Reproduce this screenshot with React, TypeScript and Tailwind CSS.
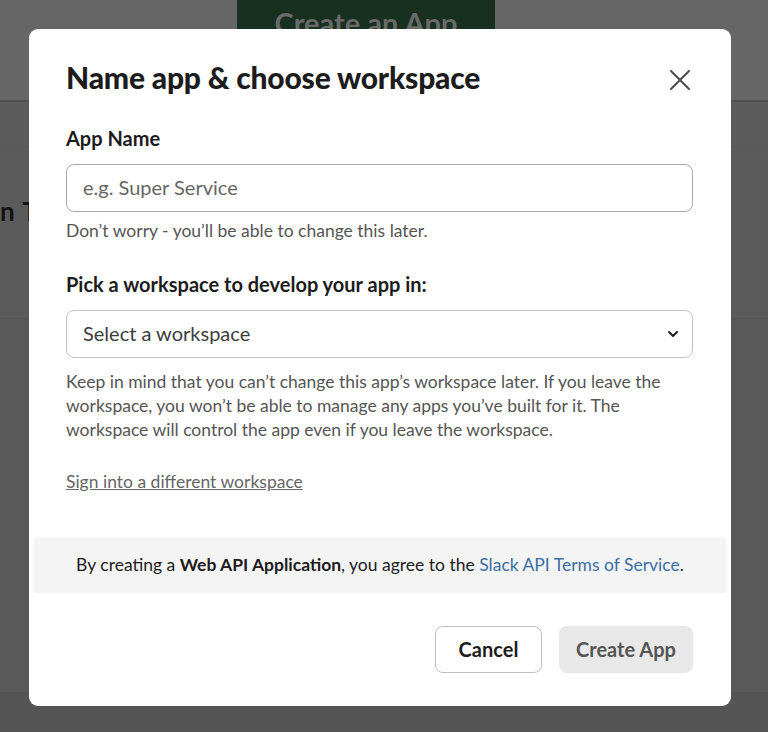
import React from "react";

export default function App() {
  return (
    <div
      className="relative w-[768px] h-[732px] overflow-hidden bg-[#5a5a5a]"
      style={{ fontFamily: "Lato, 'Noto Sans', sans-serif" }}
    >
      {/* dimmed page behind */}
      <div className="flex flex-col w-full h-full">
        <div className="h-[102px] bg-[#666666] flex justify-center border-b-2 border-[#4e4e4e]">
          <div className="ml-[-36px] w-[258px] h-[60px] mt-[-20px] bg-[#17301f] flex items-center justify-center pt-[26px]">
            <span className="text-[29px] font-bold text-[#6a6a6a]">Create an App</span>
          </div>
        </div>
        <div className="h-[45px] bg-[#5c5c5c] border-b border-[#575757]" />
        <div className="h-[172px] bg-[#5b5b5b] border-b border-[#555555] flex items-start">
          <span className="mt-[48px] text-[26px] leading-[32px] font-bold text-[#141414] tracking-[1px]">n T</span>
        </div>
        <div className="h-[374px] bg-[#595959] border-b border-[#525252]" />
        <div className="flex-1 bg-[#555555]" />
      </div>

      {/* modal */}
      <div className="absolute left-[29px] top-[29px] w-[702px] h-[677px] bg-white rounded-[9px] flex flex-col">
        <div className="flex items-center justify-between pl-[37px] pr-[38px] pt-[30px]">
          <h1 className="text-[30px] leading-[36px] font-black text-[#1d1c1d] tracking-[-0.2px]">
            Name app &amp; choose workspace
          </h1>
          <svg width="22" height="22" viewBox="0 0 22 22" className="mr-[2px] mt-[6px]">
            <path d="M2 2 L20 20 M20 2 L2 20" stroke="#4a4a4a" strokeWidth="2" strokeLinecap="round" />
          </svg>
        </div>

        <div className="flex flex-col pl-[37px] pr-[38px] pt-[31px]">
          <label className="text-[20px] leading-[24px] font-bold text-[#1d1c1d]">App Name</label>
          <div className="mt-[14px] h-[48px] rounded-[8px] border border-[#a8a8a8] flex items-center px-[16px] pb-[3px]">
            <span className="text-[20px] text-[#666666]">e.g. Super Service</span>
          </div>
          <p className="mt-[7px] text-[17.5px] leading-[24px] text-[#555555]">
            Don’t worry - you’ll be able to change this later.
          </p>

          <label className="mt-[29px] text-[20px] leading-[24px] font-bold text-[#1d1c1d]">
            Pick a workspace to develop your app in:
          </label>
          <div className="mt-[14px] h-[48px] rounded-[8px] border border-[#c4c4c4] flex items-center justify-between pl-[16px] pr-[12px]">
            <span className="text-[20px] text-[#3d3d3d] pb-[2px]">Select a workspace</span>
            <svg width="14" height="14" viewBox="0 0 14 14">
              <path d="M3 5 L7 9 L11 5" stroke="#1d1c1d" strokeWidth="2" fill="none" strokeLinecap="round" strokeLinejoin="round" />
            </svg>
          </div>
          <p className="mt-[12px] text-[17.5px] leading-[24px] text-[#555555]">
            Keep in mind that you can’t change this app’s workspace later. If you leave the workspace, you won’t be able to manage any apps you’ve built for it. The workspace will control the app even if you leave the workspace.
          </p>
          <a className="mt-[28px] self-start text-[17.5px] leading-[24px] text-[#666666] underline">
            Sign into a different workspace
          </a>
        </div>

        <div className="mt-[43px] mx-[5px] h-[56px] bg-[#f4f4f4] flex items-center justify-center">
          <p className="text-[17.5px] text-[#1d1c1d]">
            By creating a <span className="font-bold">Web API Application</span>, you agree to the{" "}
            <span className="text-[#3a6ea5]">Slack API Terms of Service</span>.
          </p>
        </div>

        <div className="flex justify-end gap-[17px] pr-[38px] pt-[33px]">
          <button className="w-[107px] h-[47px] rounded-[8px] border border-[#c0c0c0] bg-white text-[20px] font-bold text-[#1d1c1d] pb-[2px]">
            Cancel
          </button>
          <button className="w-[134px] h-[47px] rounded-[8px] bg-[#e8e8e8] text-[20px] font-bold text-[#555555] pb-[2px]">
            Create App
          </button>
        </div>
      </div>
    </div>
  );
}
